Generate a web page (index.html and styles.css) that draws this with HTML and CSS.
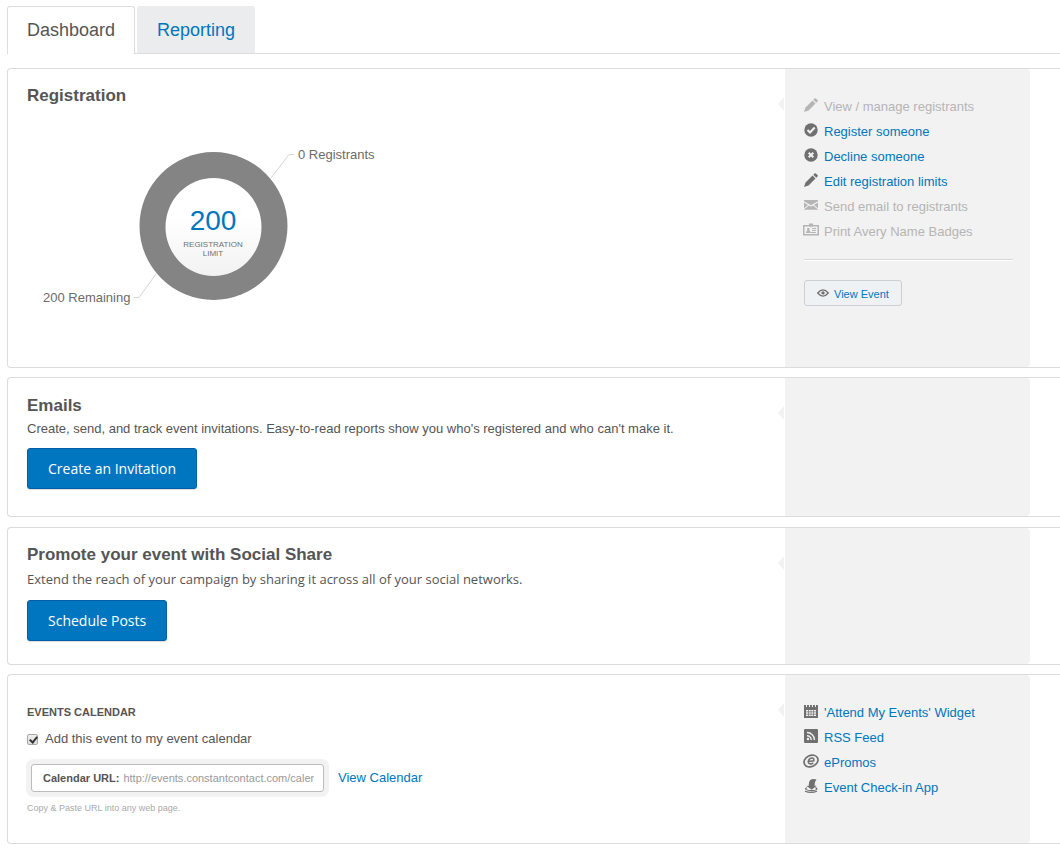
FILE: index.html
```html
<!DOCTYPE html>
<html lang="en">
<head>
    <meta charset="UTF-8">
    <meta name="viewport" content="width=device-width, initial-scale=1.0">
    <title>Event Dashboard</title>
    <link rel="stylesheet" href="styles.css">
</head>
<body>

    <nav class="tabs">
        <a class="tab active" href="#dashboard">Dashboard</a>
        <a class="tab" href="#reporting">Reporting</a>
    </nav>

    <main>
        <section class="panel panel-registration">
            <div class="panel-main">
                <h2>Registration</h2>
                <svg class="chart" width="380" height="190" viewBox="20 130 380 190">
                    <defs>
                        <linearGradient id="centerFill" x1="0" y1="0" x2="0" y2="1">
                            <stop offset="0.4" stop-color="#fff"/>
                            <stop offset="1" stop-color="#f2f2f2"/>
                        </linearGradient>
                    </defs>
                    <path class="leader" d="M271 178 L289 154.500 H294"/>
                    <path class="leader" d="M156 274 L139 297.500 H134"/>
                    <circle cx="213.500" cy="226" r="74" fill="#848484"/>
                    <ellipse cx="213.500" cy="227" rx="48" ry="49" fill="url(#centerFill)"/>
                    <text class="chart-total" x="213" y="230">200</text>
                    <text class="chart-caption" x="213" y="247">REGISTRATION</text>
                    <text class="chart-caption" x="213" y="256">LIMIT</text>
                    <text class="chart-label" x="298" y="159">0 Registrants</text>
                    <text class="chart-label" x="43" y="302">200 Remaining</text>
                </svg>
            </div>
            <aside class="panel-side">
                <ul class="actions">
                    <li class="disabled">
                        <svg class="icon" viewBox="0 0 14 14"><path d="M0 14l1.500-4.500 7-7 3 3-7 7zM9.300 1.700l1.200-1.200q.7-.7 1.400 0l1.600 1.600q.7.7 0 1.400l-1.200 1.200z"/></svg>
                        <span>View / manage registrants</span>
                    </li>
                    <li>
                        <svg class="icon" viewBox="0 0 14 14"><circle cx="7" cy="7" r="6.700"/><path class="cut" d="M3.500 7l2.500 2.500 4.700-5"/></svg>
                        <a href="#register">Register someone</a>
                    </li>
                    <li>
                        <svg class="icon" viewBox="0 0 14 14"><circle cx="7" cy="7" r="6.700"/><path class="cut" d="M4.700 4.700l4.600 4.600M9.300 4.700l-4.600 4.600"/></svg>
                        <a href="#decline">Decline someone</a>
                    </li>
                    <li>
                        <svg class="icon" viewBox="0 0 14 14"><path d="M0 14l1.500-4.500 7-7 3 3-7 7zM9.300 1.700l1.200-1.200q.7-.7 1.400 0l1.600 1.600q.7.7 0 1.400l-1.200 1.200z"/></svg>
                        <a href="#limits">Edit registration limits</a>
                    </li>
                    <li class="disabled">
                        <svg class="icon" viewBox="0 0 14 14"><path d="M0 2h14v1.200l-7 4-7-4zM0 4.500l4 2.400-4 3.300zM14 4.500l-4 2.400 4 3.300zM5 7.500l2 1.200 2-1.200 5 4v.2H0v-.2z"/></svg>
                        <span>Send email to registrants</span>
                    </li>
                    <li class="disabled">
                        <svg class="icon icon-wide" viewBox="0 0 16 14"><path fill-rule="evenodd" d="M0 2h16v10.500H0zM1.500 3.500v7.500h13V3.500z"/><path d="M6 .5h4v3H6zM9 5h4v1H9zM9 7h4v1H9zM8 9h5v1H8zM3 10V8.700L4.200 8V5h2.300v3l1.200.7V10z"/></svg>
                        <span>Print Avery Name Badges</span>
                    </li>
                </ul>
                <hr>
                <button type="button" class="btn-small">
                    <svg class="eye" viewBox="0 0 12 8"><path d="M.7 4Q6-2.200 11.300 4 6 10.200.7 4z" fill="none" stroke="#707070" stroke-width="1.300"/><circle cx="6" cy="3.900" r="1.700" fill="#707070"/></svg>
                    View Event
                </button>
            </aside>
        </section>

        <section class="panel panel-emails">
            <div class="panel-main">
                <h2>Emails</h2>
                <p>Create, send, and track event invitations. Easy-to-read reports show you who's registered and who can't make it.</p>
                <button type="button" class="btn-primary">Create an Invitation</button>
            </div>
            <aside class="panel-side"></aside>
        </section>

        <section class="panel panel-social">
            <div class="panel-main">
                <h2>Promote your event with Social Share</h2>
                <p>Extend the reach of your campaign by sharing it across all of your social networks.</p>
                <button type="button" class="btn-primary">Schedule Posts</button>
            </div>
            <aside class="panel-side"></aside>
        </section>

        <section class="panel panel-calendar">
            <div class="panel-main">
                <h3>EVENTS CALENDAR</h3>
                <label class="check">
                    <input type="checkbox" checked>
                    Add this event to my event calendar
                </label>
                <div class="url-row">
                    <div class="url-box">
                        <label for="calendarUrl">Calendar URL:</label>
                        <input type="text" id="calendarUrl" value="http://events.constantcontact.com/calendar" readonly>
                    </div>
                    <a href="#calendar">View Calendar</a>
                </div>
                <p class="hint">Copy &amp; Paste URL into any web page.</p>
            </div>
            <aside class="panel-side">
                <ul class="actions">
                    <li>
                        <svg class="icon" viewBox="0 0 14 14"><path d="M0 1h14v13H0z"/><path d="M2 6h2v1.500H2zM4.700 6h2v1.500h-2zM7.300 6h2v1.500h-2zM10 6h2v1.500h-2zM2 8.300h2v1.500H2zM4.700 8.300h2v1.500h-2zM7.300 8.300h2v1.500h-2zM10 8.300h2v1.500h-2zM2 10.600h2v1.500H2zM4.700 10.600h2v1.500h-2zM7.300 10.600h2v1.500h-2zM10 10.600h2v1.500h-2z" fill="#f2f2f2"/><path d="M2 1h1v2H2zM5 1h1v2H5zM8 1h1v2H8zM11 1h1v2h-1z" fill="#f2f2f2"/></svg>
                        <a href="#widget">'Attend My Events' Widget</a>
                    </li>
                    <li>
                        <svg class="icon" viewBox="0 0 14 14"><rect width="14" height="14" rx="1"/><path d="M3 3.500a7.500 7.500 0 0 1 7.500 7.500M3 6.800A4.200 4.200 0 0 1 7.200 11" fill="none" stroke="#f2f2f2" stroke-width="1.400"/><circle cx="4" cy="10" r="1.200" fill="#f2f2f2"/></svg>
                        <a href="#rss">RSS Feed</a>
                    </li>
                    <li>
                        <svg class="icon icon-wide" viewBox="0 0 16 14"><g fill="none" stroke="#707070"><ellipse cx="8" cy="7" rx="7.200" ry="5.600" stroke-width="1.700" transform="rotate(-25 8 7)"/><path d="M5.500 7.600l5.300-.8C11.600 3.200 7.500 3.200 5.700 6c-1.600 3.500 1.600 5 4.600 2.800" stroke-width="1.500"/></g></svg>
                        <a href="#epromos">ePromos</a>
                    </li>
                    <li>
                        <svg class="icon" viewBox="0 0 14 14"><path d="M6.500.8Q9-.5 12.500.5L11 3l-.5 3.500 2 .3-4.700 4L2.500 7l2.300-.3Q4.500 2.500 6.500.8z"/><path d="M3 8.700C-.2 10 2.500 11.600 7.500 11.600s7-1.700 3.800-3M1 12.200q6 2.300 12 0" fill="none" stroke="#707070" stroke-width="1.100"/></svg>
                        <a href="#checkin">Event Check-in App</a>
                    </li>
                </ul>
            </aside>
        </section>
    </main>

</body>
</html>
```
FILE: styles.css
```css
* {
    box-sizing: border-box;
}
body {
    font-family: "Liberation Sans", Arial, sans-serif;
    font-size: 13px;
    line-height: 20px;
    color: #555;
    background-color: #fff;
    margin: 0;
    padding: 6px 0 15px 7px;
}
a {
    color: #0076be;
    text-decoration: none;
}
h2 {
    font-size: 17px;
    line-height: 20px;
    margin: 0 0 3px;
}
h3 {
    font-size: 11px;
    line-height: 16px;
    margin: 0 0 9px;
}
p {
    margin: 0 0 10px;
}

/* Tabs */
.tabs {
    display: flex;
    gap: 2px;
    margin-bottom: 14px;
    border-bottom: 1px solid #dcdcdc;
}
.tab {
    font-size: 18px;
    line-height: 46px;
    padding: 1px 20px 0;
    background-color: #ebecee;
    border-radius: 3px 3px 0 0;
}
.tab.active {
    color: #555;
    background-color: #fff;
    border: 1px solid #dcdcdc;
    border-bottom: 0;
    padding: 0 19px;
    margin-bottom: -1px;
}

/* Panels */
.panel {
    display: flex;
    border: 1px solid #dcdcdc;
    border-right: 0;
    border-radius: 4px 0 0 4px;
    margin-bottom: 9px;
}
.panel-main {
    flex: 1;
    padding: 17px 19px 27px;
}
.panel-side {
    position: relative;
    width: 245px;
    margin-right: 30px;
    padding: 25px 17px 20px 19px;
    background-color: #f2f2f2;
    border-radius: 0 4px 4px 0;
}
.panel-side::before {
    content: "";
    position: absolute;
    left: -7px;
    top: 28px;
    border: 7px solid transparent;
    border-left: 0;
    border-right: 6px solid #f2f2f2;
}
.panel-registration .panel-main {
    padding-bottom: 47px;
}
.panel-emails {
    margin-bottom: 10px;
}
.panel-emails .panel-main {
    padding-top: 18px;
}
.panel-emails p {
    margin-bottom: 9px;
}
.panel-social .panel-main {
    padding-bottom: 23px;
}
.panel-social p {
    font-family: "Open Sans", sans-serif;
    line-height: 22px;
}
.panel-calendar .panel-main {
    padding-top: 29px;
    padding-bottom: 28px;
}

/* Registration chart */
.chart {
    display: block;
    margin: 24px 0 0 -7px;
}
.leader {
    fill: none;
    stroke: #d5d5d5;
}
.chart-total {
    font-size: 28px;
    fill: #0076be;
    text-anchor: middle;
}
.chart-caption {
    font-size: 8px;
    fill: #707070;
    text-anchor: middle;
}
.chart-label {
    font-size: 13px;
    fill: #6b6b6b;
}

/* Side links */
.actions {
    list-style: none;
    margin: 0;
    padding: 0;
}
.actions li {
    display: flex;
    align-items: center;
    gap: 6px;
    height: 25px;
}
.actions .disabled {
    color: #b5b5b5;
}
.icon {
    width: 14px;
    height: 14px;
    margin-bottom: 3px;
    fill: #707070;
}
.icon-wide {
    width: 16px;
    margin-left: -1px;
    margin-right: -1px;
}
.disabled .icon {
    fill: #b5b5b5;
}
.icon .cut {
    fill: none;
    stroke: #f2f2f2;
    stroke-width: 2;
}
.panel-side hr {
    border: 0;
    border-top: 1px solid #d8d8d8;
    border-bottom: 1px solid #fff;
    margin: 15px 0 19px;
}

/* Buttons */
.btn-small {
    display: flex;
    align-items: center;
    gap: 5px;
    height: 26px;
    padding: 2px 12px 0;
    font-family: inherit;
    font-size: 11px;
    color: #0076be;
    background-color: #eff2f5;
    border: 1px solid #ccced0;
    border-radius: 3px;
    cursor: pointer;
}
.eye {
    width: 12px;
    height: 8px;
    margin-bottom: 2px;
}
.btn-primary {
    display: block;
    height: 41px;
    padding: 0 20px;
    font-family: "Open Sans", sans-serif;
    font-size: 14px;
    color: #fff;
    background-color: #0076c0;
    border: 1px solid #005ea6;
    border-radius: 3px;
    box-shadow: 0 1px 1px rgba(0, 0, 0, 0.15);
    cursor: pointer;
}

/* Events calendar */
.check {
    display: flex;
    align-items: center;
    gap: 7px;
    margin-bottom: 10px;
}
.check input {
    appearance: none;
    position: relative;
    width: 11px;
    height: 11px;
    margin: 1px 0 0;
    border: 1px solid #a8a8a8;
    border-radius: 2px;
    background-image: linear-gradient(#eee, #ddd);
}
.check input:checked::after {
    content: "";
    position: absolute;
    left: 3px;
    top: 0;
    width: 3px;
    height: 6px;
    border: solid #333;
    border-width: 0 2px 2px 0;
    transform: rotate(40deg);
}
.url-row {
    display: flex;
    align-items: center;
    gap: 14px;
}
.url-box {
    display: flex;
    align-items: center;
    gap: 4px;
    width: 293px;
    height: 28px;
    margin: 5px 0 5px 4px;
    padding: 0 9px 0 11px;
    border: 1px solid #bbb;
    border-radius: 3px;
    box-shadow: 0 0 0 5px #f2f2f2;
}
.url-box label {
    font-size: 11px;
    font-weight: bold;
    white-space: nowrap;
}
.url-box input {
    flex: 1;
    min-width: 0;
    padding: 0;
    border: 0;
    outline: 0;
    background: none;
    font-family: inherit;
    font-size: 11px;
    color: #999;
}
.hint {
    font-size: 9px;
    line-height: 14px;
    color: #aaa;
    margin: 4px 0 0;
}
```
